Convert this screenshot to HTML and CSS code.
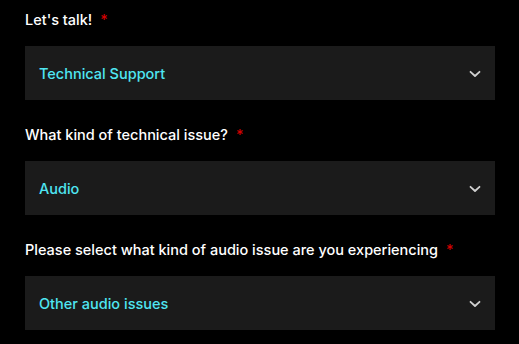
FILE: index.html
```html
<!DOCTYPE html>
<html>
<head>
<meta charset="utf-8">
<link rel="stylesheet" href="styles.css">
</head>
<body>
<form class="form">
  <div class="field">
    <label class="label">Let's talk!<span class="req">*</span></label>
    <div class="select">
      <span class="value">Technical Support</span>
      <svg class="chev" width="12" height="8" viewBox="0 0 12 8"><path d="M1.5 1.8 L6 6 L10.5 1.8" fill="none" stroke="#d0d0d0" stroke-width="1.8" stroke-linecap="round" stroke-linejoin="round"/></svg>
    </div>
  </div>
  <div class="field">
    <label class="label">What kind of technical issue?<span class="req">*</span></label>
    <div class="select">
      <span class="value">Audio</span>
      <svg class="chev" width="12" height="8" viewBox="0 0 12 8"><path d="M1.5 1.8 L6 6 L10.5 1.8" fill="none" stroke="#d0d0d0" stroke-width="1.8" stroke-linecap="round" stroke-linejoin="round"/></svg>
    </div>
  </div>
  <div class="field">
    <label class="label">Please select what kind of audio issue are you experiencing<span class="req">*</span></label>
    <div class="select">
      <span class="value">Other audio issues</span>
      <svg class="chev" width="12" height="8" viewBox="0 0 12 8"><path d="M1.5 1.8 L6 6 L10.5 1.8" fill="none" stroke="#d0d0d0" stroke-width="1.8" stroke-linecap="round" stroke-linejoin="round"/></svg>
    </div>
  </div>
</form>
</body>
</html>
```
FILE: styles.css
```css
html, body {
  margin: 0;
  padding: 0;
  background: #000;
}
body {
  font-family: Inter, "Liberation Sans", Arial, sans-serif;
  font-size: 14.5px;
  font-weight: 500;
}
.form {
  display: flex;
  flex-direction: column;
  gap: 26px;
  padding: 11px 24px 0 25px;
}
.field {
  display: flex;
  flex-direction: column;
  gap: 17px;
}
.label {
  color: #fff;
  line-height: 18px;
}
.req {
  color: #d40000;
  margin-left: 8px;
}
.select {
  height: 54px;
  background: #1b1b1b;
  display: flex;
  align-items: center;
  justify-content: space-between;
  padding: 0 14px 0 14px;
}
.value {
  color: #4fe6f2;
}
.chev {
  display: block;
  margin-top: 1px;
}
```
